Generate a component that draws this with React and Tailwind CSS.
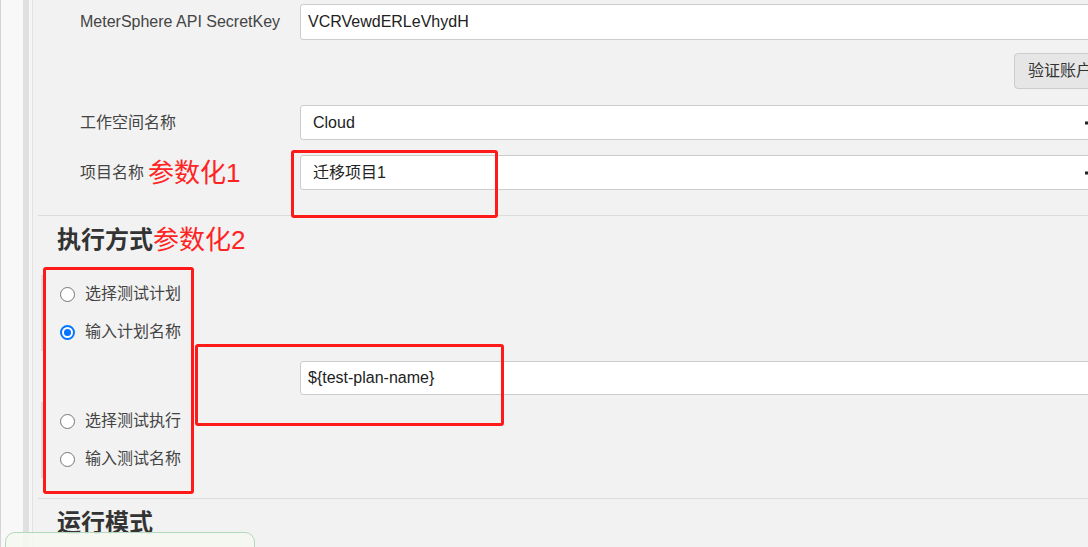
import React from 'react';

const font = "font-['Liberation_Sans','Noto_Sans_CJK_SC',sans-serif]";

function Field({ label, extra, children, className = '' }) {
  return (
    <div className={`flex items-center ${className}`}>
      <div className="w-[267px] shrink-0 pl-[47px] text-[16px] text-[#444] flex items-center">
        <span>{label}</span>
        {extra}
      </div>
      {children}
    </div>
  );
}

function TextBox({ value, h = 'h-[35px]', arrow = false }) {
  return (
    <div className={`relative w-[800px] shrink-0 ${h} flex items-center rounded-[3px] border border-[#cccccc] bg-white px-[12px] text-[16px] text-[#222]`}>
      {value}
      {arrow && <span className="absolute left-[784px] top-1/2 -translate-y-1/2 h-[3px] w-[4px] bg-[#222]" />}
    </div>
  );
}

function Radio({ label, checked }) {
  return (
    <div className="flex h-[38px] items-center gap-[10px] pl-[17px] text-[16px] text-[#444]">
      {checked ? (
        <span className="flex h-[15px] w-[15px] items-center justify-center rounded-full border-2 border-[#0075ff] bg-white">
          <span className="h-[7px] w-[7px] rounded-full bg-[#0075ff]" />
        </span>
      ) : (
        <span className="h-[15px] w-[15px] rounded-full border border-[#767676] bg-white" />
      )}
      <span>{label}</span>
    </div>
  );
}

export default function App() {
  return (
    <div className={`relative flex h-[547px] w-[1088px] overflow-hidden bg-[#f2f2f2] ${font}`}>
      <div className="flex w-[33px] shrink-0">
        <div className="w-px bg-[#d4d4d4]" />
        <div className="w-[22px] bg-[#f8f8f8]" />
        <div className="w-[6px] bg-[#e0e0e0]" />
        <div className="w-[3px] bg-[#f5f5f5]" />
        <div className="w-px bg-[#e2e2e2]" />
      </div>

      <div className="relative flex min-w-0 flex-1 flex-col">
        <Field label="MeterSphere API SecretKey" className="mt-[4px]">
          <div className="w-[800px] shrink-0 h-[36px] flex items-center rounded-[3px] border border-[#cccccc] bg-white px-[7px] text-[16px] text-[#222]">
            VCRVewdERLeVhydH
          </div>
        </Field>

        <div className="mt-[13px] flex">
          <button className="ml-[981px] h-[36px] shrink-0 whitespace-nowrap rounded-[4px] border border-[#cccccc] bg-[#e6e6e6] px-[13px] text-[16px] text-[#333]">
            验证账户信息
          </button>
        </div>

        <Field label="工作空间名称" className="mt-[16px]">
          <TextBox value="Cloud" arrow />
        </Field>

        <Field
          label="项目名称"
          className="mt-[15px]"
          extra={<span className="ml-[4px] text-[26px] leading-none text-[#ff2424]">参数化1</span>}
        >
          <TextBox value="迁移项目1" arrow />
        </Field>

        <div className="ml-[5px] mt-[25px] h-px bg-[#dcdcdc]" />

        <div className="mt-[8px] flex h-[32px] items-center pl-[24px]">
          <span className="text-[24px] font-bold text-[#333]">执行方式</span>
          <span className="text-[26px] text-[#ff2424]">参数化2</span>
        </div>

        <div className="ml-[8px] mt-[19px] border-l-2 border-[#dddddd]">
          <Radio label="选择测试计划" />
          <Radio label="输入计划名称" checked />
        </div>

        <div className="mt-[10px] flex">
          <div className="ml-[267px] w-[800px] shrink-0 h-[34px] flex items-center rounded-[3px] border border-[#cccccc] bg-white px-[7px] text-[16px] text-[#222]">
            {'${test-plan-name}'}
          </div>
        </div>

        <div className="ml-[8px] mt-[7px] border-l-2 border-[#dddddd]">
          <Radio label="选择测试执行" />
          <Radio label="输入测试名称" />
        </div>

        <div className="ml-[5px] mt-[20px] h-px bg-[#dcdcdc]" />

        <div className="mt-[8px] flex h-[32px] items-center pl-[24px]">
          <span className="text-[24px] font-bold text-[#333]">运行模式</span>
        </div>

        <div className="pointer-events-none absolute left-[258px] top-[150px] h-[68px] w-[207px] rounded-[3px] border-[3px] border-[#ff1a1a]" />
        <div className="pointer-events-none absolute left-[10px] top-[267px] h-[227px] w-[151px] rounded-[3px] border-[3px] border-[#ff1a1a]" />
        <div className="pointer-events-none absolute left-[162px] top-[344px] h-[82px] w-[309px] rounded-[3px] border-[3px] border-[#ff1a1a]" />
      </div>

      <div className="absolute left-[5px] top-[532px] h-[30px] w-[250px] rounded-t-[10px] border border-[#b3d8bd] bg-[#f4f8f1]/90" />
    </div>
  );
}
